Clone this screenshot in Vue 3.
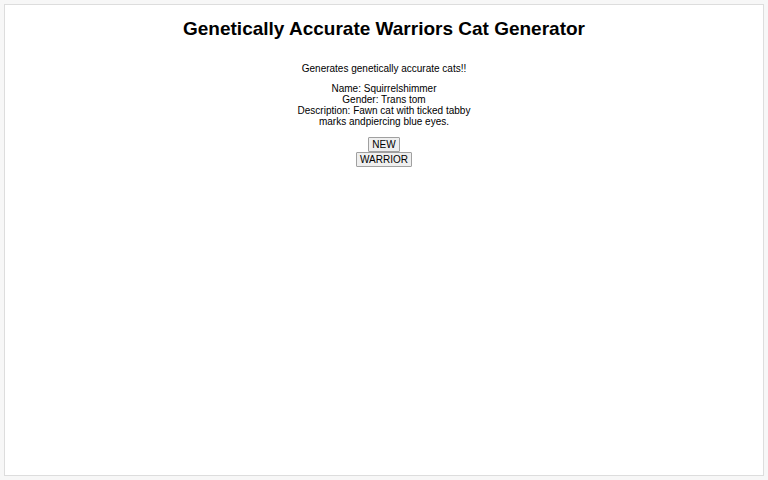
<script setup>
const cat = {
  name: 'Squirrelshimmer',
  gender: 'Trans tom',
  description: 'Fawn cat with ticked tabby marks andpiercing blue eyes.',
}
</script>

<template>
  <main class="page">
    <h1 class="title">Genetically Accurate Warriors Cat Generator</h1>
    <section class="generator">
      <p class="intro">Generates genetically accurate cats!!</p>
      <p class="result">
        Name: {{ cat.name }}<br />
        Gender: {{ cat.gender }}<br />
        Description: {{ cat.description }}
      </p>
      <div class="actions">
        <button type="button" class="action">NEW</button>
        <button type="button" class="action">WARRIOR</button>
      </div>
    </section>
  </main>
</template>

<style>
body {
  background: #f7f7f7;
}
</style>

<style scoped>
.page {
  box-sizing: border-box;
  min-height: calc(100vh - 8px);
  margin: 4px;
  padding: 12px;
  border: 1px solid #dddddd;
  background: #ffffff;
  color: #000000;
  font-family: "Liberation Sans", Arial, sans-serif;
  font-size: 10px;
  line-height: 11px;
  text-align: center;
}

.title {
  margin: 0;
  font-size: 19px;
  line-height: 24px;
}

.generator {
  max-width: 180px;
  margin: 22px auto 0;
}

.intro {
  margin: 0 0 9px;
}

.result {
  margin: 0 0 10px;
}

.actions {
  display: flex;
  flex-direction: column;
  align-items: center;
}

.action {
  box-sizing: border-box;
  height: 15px;
  padding: 0 3px;
  border: 1px solid #a0a0a0;
  border-radius: 1px;
  background: #efefef;
  color: #000000;
  font: inherit;
}
</style>
